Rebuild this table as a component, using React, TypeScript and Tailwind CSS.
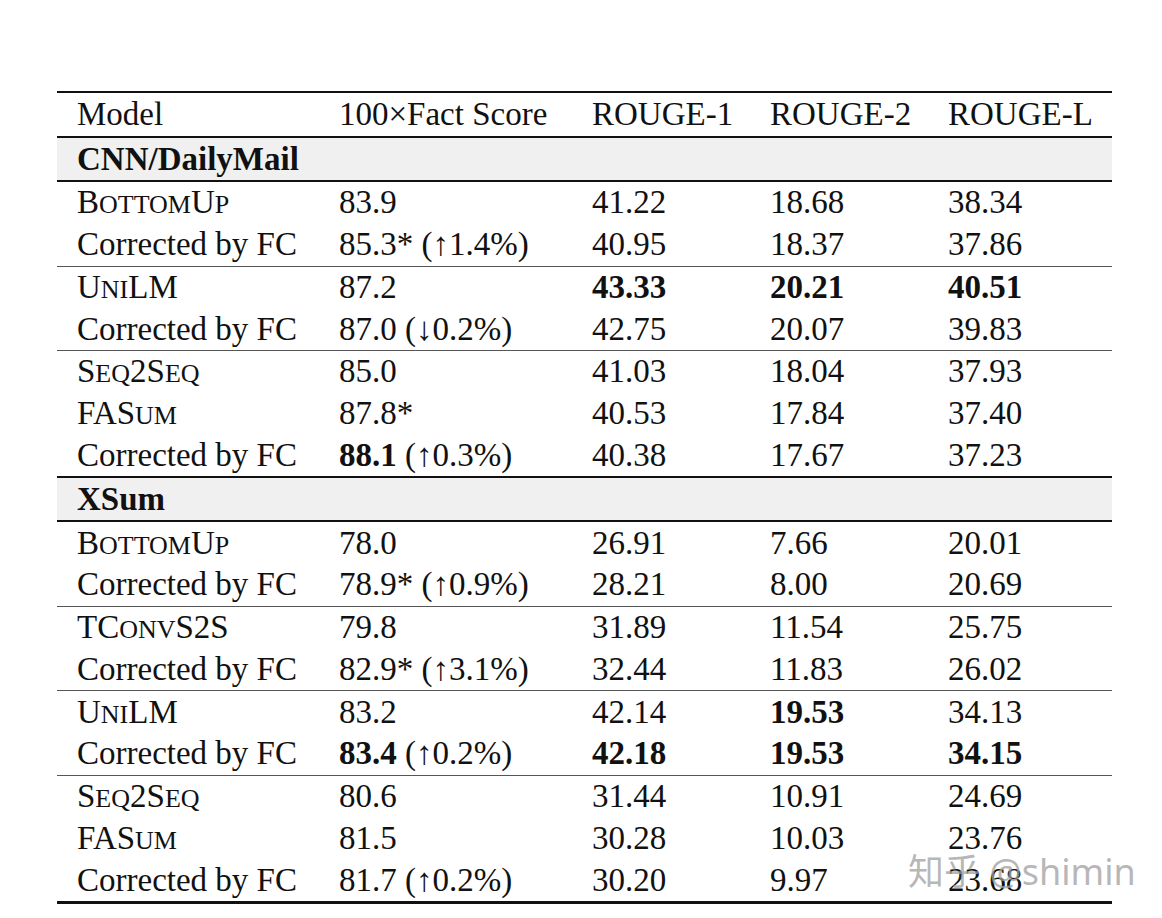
type Row = {
  model: string;
  caps?: boolean;
  fact: string;
  factBold?: boolean;
  note?: string;
  r1: string;
  r2: string;
  rl: string;
  bold?: [boolean, boolean, boolean];
};

const cnn: Row[][] = [
  [
    { model: "BottomUp", caps: true, fact: "83.9", r1: "41.22", r2: "18.68", rl: "38.34" },
    { model: "Corrected by FC", fact: "85.3*", note: " (↑1.4%)", r1: "40.95", r2: "18.37", rl: "37.86" },
  ],
  [
    { model: "UniLM", caps: true, fact: "87.2", r1: "43.33", r2: "20.21", rl: "40.51", bold: [true, true, true] },
    { model: "Corrected by FC", fact: "87.0", note: " (↓0.2%)", r1: "42.75", r2: "20.07", rl: "39.83" },
  ],
  [
    { model: "Seq2Seq", caps: true, fact: "85.0", r1: "41.03", r2: "18.04", rl: "37.93" },
    { model: "FASum", caps: true, fact: "87.8*", r1: "40.53", r2: "17.84", rl: "37.40" },
    { model: "Corrected by FC", fact: "88.1", factBold: true, note: " (↑0.3%)", r1: "40.38", r2: "17.67", rl: "37.23" },
  ],
];

const xsum: Row[][] = [
  [
    { model: "BottomUp", caps: true, fact: "78.0", r1: "26.91", r2: "7.66", rl: "20.01" },
    { model: "Corrected by FC", fact: "78.9*", note: " (↑0.9%)", r1: "28.21", r2: "8.00", rl: "20.69" },
  ],
  [
    { model: "TConvS2S", caps: true, fact: "79.8", r1: "31.89", r2: "11.54", rl: "25.75" },
    { model: "Corrected by FC", fact: "82.9*", note: " (↑3.1%)", r1: "32.44", r2: "11.83", rl: "26.02" },
  ],
  [
    { model: "UniLM", caps: true, fact: "83.2", r1: "42.14", r2: "19.53", rl: "34.13", bold: [false, true, false] },
    { model: "Corrected by FC", fact: "83.4", factBold: true, note: " (↑0.2%)", r1: "42.18", r2: "19.53", rl: "34.15", bold: [true, true, true] },
  ],
  [
    { model: "Seq2Seq", caps: true, fact: "80.6", r1: "31.44", r2: "10.91", rl: "24.69" },
    { model: "FASum", caps: true, fact: "81.5", r1: "30.28", r2: "10.03", rl: "23.76" },
    { model: "Corrected by FC", fact: "81.7", note: " (↑0.2%)", r1: "30.20", r2: "9.97", rl: "23.68" },
  ],
];

const grid = "grid grid-cols-[262px_253px_178px_178px_1fr] items-center pl-[20px]";

// LaTeX-style small caps: lowercase letters set as smaller capitals
function SmallCaps({ text }: { text: string }) {
  const parts = text.match(/[a-z]+|[^a-z]+/g) ?? [];
  return (
    <span>
      {parts.map((p, i) =>
        /[a-z]/.test(p) ? (
          <span key={i} className="text-[26px]">
            {p.toUpperCase()}
          </span>
        ) : (
          <span key={i}>{p}</span>
        )
      )}
    </span>
  );
}

function DataRow({ row }: { row: Row }) {
  const b = row.bold ?? [false, false, false];
  return (
    <div className={`${grid} h-[41.75px]`}>
      {row.caps ? <SmallCaps text={row.model} /> : <span>{row.model}</span>}
      <span>
        <span className={row.factBold ? "font-bold" : ""}>{row.fact}</span>
        {row.note}
      </span>
      <span className={b[0] ? "font-bold" : ""}>{row.r1}</span>
      <span className={b[1] ? "font-bold" : ""}>{row.r2}</span>
      <span className={b[2] ? "font-bold" : ""}>{row.rl}</span>
    </div>
  );
}

function Section({ title, groups }: { title: string; groups: Row[][] }) {
  return (
    <>
      <div className="flex h-[42px] items-center bg-[#f0f0f0] pl-[20px] font-bold">{title}</div>
      <div className="h-[2px] bg-[#111]" />
      {groups.map((g, i) => (
        <div key={i}>
          {i > 0 && <div className="h-px bg-[#555]" />}
          {g.map((r, j) => (
            <DataRow key={j} row={r} />
          ))}
        </div>
      ))}
    </>
  );
}

export default function App() {
  return (
    <div className="relative h-[918px] w-[1162px] overflow-hidden bg-white pt-[91px] font-['Liberation_Serif',serif] text-[33px] leading-none text-[#111]">
      <div className="ml-[57px] w-[1055px]">
        <div className="h-[2px] bg-[#111]" />
        <div className={`${grid} h-[43px]`}>
          <span>Model</span>
          <span>100×Fact Score</span>
          <span>ROUGE-1</span>
          <span>ROUGE-2</span>
          <span>ROUGE-L</span>
        </div>
        <div className="h-[2px] bg-[#111]" />
        <Section title="CNN/DailyMail" groups={cnn} />
        <div className="h-[2px] bg-[#111]" />
        <Section title="XSum" groups={xsum} />
        <div className="h-[3px] bg-[#111]" />
      </div>

      {/* watermark */}
      <div className="absolute left-[908px] top-[854px] whitespace-nowrap font-['Noto_Sans','Noto_Sans_CJK_SC',sans-serif] text-[36px] leading-none text-[#a0a0a0]/75">
        知乎 @shimin
      </div>
    </div>
  );
}
